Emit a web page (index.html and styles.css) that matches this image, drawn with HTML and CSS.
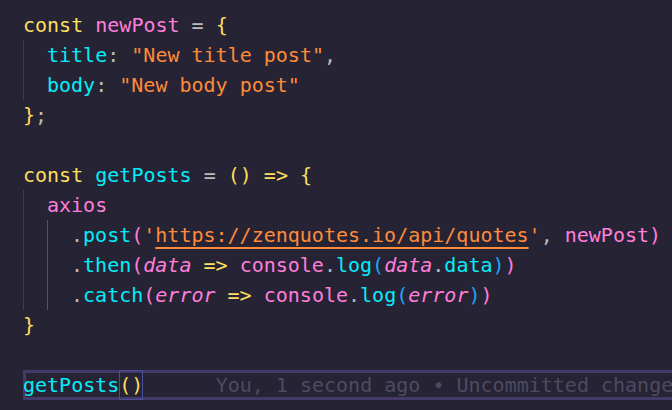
FILE: index.html
```html
<!DOCTYPE html>
<html>
<head>
<meta charset="utf-8">
<link rel="stylesheet" href="styles.css">
</head>
<body>
<div class="editor">
  <div class="line"><span class="k">const</span> <span class="p">newPost</span> <span class="w">=</span> <span class="k">{</span></div>
  <div class="block">
    <div class="line"><span class="c">title</span><span class="w">:</span> <span class="o">"New title post"</span><span class="w">,</span></div>
    <div class="line"><span class="c">body</span><span class="w">:</span> <span class="o">"New body post"</span></div>
  </div>
  <div class="line"><span class="k">}</span><span class="w">;</span></div>
  <div class="line"> </div>
  <div class="line"><span class="k">const</span> <span class="c">getPosts</span> <span class="w">=</span> <span class="k">() =&gt; {</span></div>
  <div class="block">
    <div class="line"><span class="p">axios</span></div>
    <div class="block active">
      <div class="line"><span class="g">.</span><span class="c">post</span><span class="p">(</span><span class="o">'<span class="u">https://zenquotes.io/api/quotes</span>'</span><span class="w">,</span> <span class="p">newPost</span><span class="p">)</span></div>
      <div class="line"><span class="g">.</span><span class="c">then</span><span class="p">(</span><span class="p i">data</span> <span class="k">=&gt;</span> <span class="p">console</span><span class="g">.</span><span class="c">log</span><span class="b">(</span><span class="p i">data</span><span class="g">.</span><span class="c">data</span><span class="b">)</span><span class="p">)</span></div>
      <div class="line"><span class="g">.</span><span class="c">catch</span><span class="p">(</span><span class="p i">error</span> <span class="k">=&gt;</span> <span class="p">console</span><span class="g">.</span><span class="c">log</span><span class="b">(</span><span class="p i">error</span><span class="b">)</span><span class="p">)</span></div>
    </div>
  </div>
  <div class="line"><span class="k">}</span></div>
  <div class="line"> </div>
  <div class="line current"><span class="c">getPosts</span><span class="match"><span class="k">()</span></span><span class="blame">      You, 1 second ago • Uncommitted changes</span></div>
</div>
</body>
</html>
```

FILE: styles.css
```css
html, body {
  margin: 0;
  padding: 0;
  background: #262335;
  width: 672px;
  height: 410px;
  overflow: hidden;
}

.editor {
  padding: 10px 0 0 23px;
  font-family: "DejaVu Sans Mono", "Liberation Mono", monospace;
  font-size: 20px;
  line-height: 30px;
  color: #bbbbbb;
  overflow: hidden;
  height: 400px;
}

.line {
  height: 30px;
  white-space: pre;
}

.block {
  border-left: 1px solid #3e3a52;
  padding-left: 23px;
}

.block.active {
  border-left-color: #56526a;
}

.k { color: #fede5d; }
.p { color: #ff7edb; }
.c { color: #03edf9; }
.o { color: #ff8b39; }
.w { color: #bbbbbb; }
.g { color: #b8b8c0; }
.b { color: #1ea4ff; }
.i { font-style: italic; }

.u {
  text-decoration: underline;
  text-decoration-color: #ff8b39;
  text-decoration-thickness: 2px;
  text-underline-offset: 5px;
}

.current {
  margin-right: -40px;
  box-shadow: inset 0 0 0 3px #44396a;
}

.match {
  display: inline-block;
  height: 30px;
  vertical-align: top;
  box-shadow: inset 0 0 0 1px #4b4f9b;
}

.blame {
  color: #4e4a62;
}
```
